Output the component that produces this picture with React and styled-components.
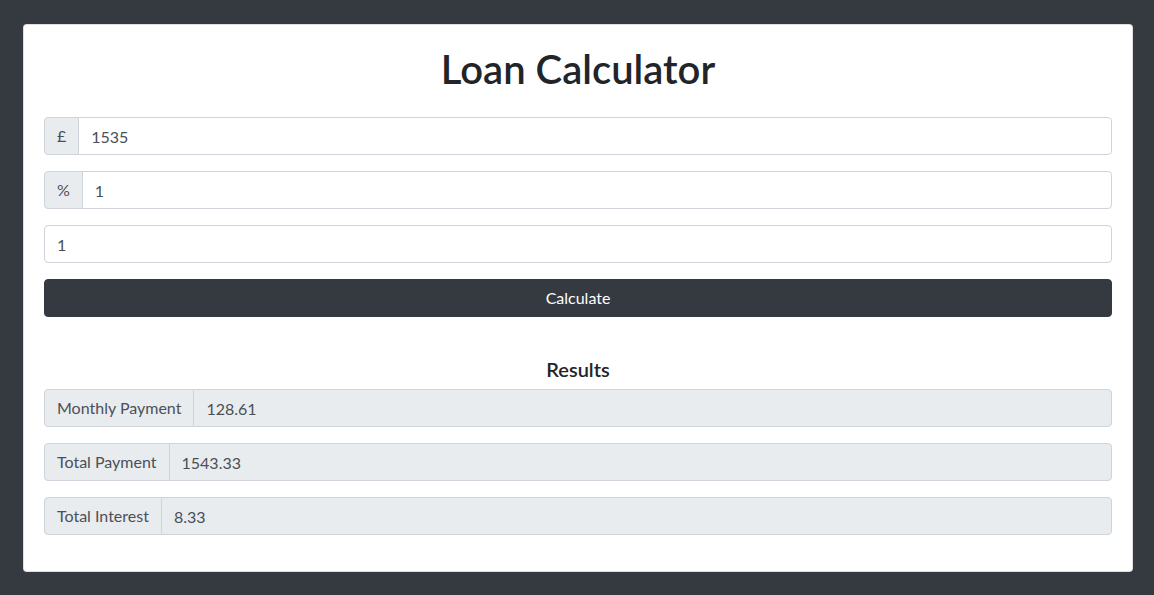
import React, { useState } from "react";
import styled, { createGlobalStyle } from "styled-components";

const GlobalStyle = createGlobalStyle`
  *, *::before, *::after { box-sizing: border-box; }
  html, body { margin: 0; padding: 0; }
  body {
    background: #343a40;
    font-family: "Lato", "Open Sans", sans-serif;
    font-size: 16px;
    line-height: 1.5;
    color: #212529;
  }
`;

const Page = styled.div`
  padding: 24px 0 24px 2px;
`;

const Card = styled.div`
  width: 1110px;
  margin: 0 auto;
  background: #fff;
  border: 1px solid rgba(0, 0, 0, 0.125);
  border-radius: 4px;
  padding: 20px;
`;

const Title = styled.h1`
  margin: 0 0 24px;
  font-size: 40px;
  line-height: 48px;
  font-weight: 600;
  text-align: center;
  color: #212529;
`;

const Form = styled.form`
  display: flex;
  flex-direction: column;
  gap: 16px;
`;

const Group = styled.div`
  display: flex;
  align-items: stretch;
  width: 100%;
  height: 38px;
`;

const Addon = styled.span`
  display: flex;
  align-items: center;
  padding: 6px 12px;
  font-size: 16px;
  line-height: 24px;
  color: #495057;
  background: #e9ecef;
  border: 1px solid #ced4da;
  border-radius: 4px 0 0 4px;
  white-space: nowrap;
`;

const Input = styled.input`
  flex: 1;
  min-width: 0;
  height: 38px;
  padding: 6px 12px;
  font-family: inherit;
  font-size: 16px;
  line-height: 24px;
  color: #495057;
  background: ${(p) => (p.readOnly ? "#e9ecef" : "#fff")};
  border: 1px solid #ced4da;
  border-radius: ${(p) => (p.$attached ? "0 4px 4px 0" : "4px")};
  margin-left: ${(p) => (p.$attached ? "-1px" : "0")};
  outline: none;
`;

const Button = styled.button`
  height: 38px;
  width: 100%;
  padding: 6px 12px;
  font-family: inherit;
  font-size: 16px;
  line-height: 24px;
  color: #fff;
  background: #343a40;
  border: 1px solid #343a40;
  border-radius: 4px;
  cursor: pointer;
`;

const Results = styled.section`
  margin-top: 40px;
  display: flex;
  flex-direction: column;
  gap: 16px;
  padding-bottom: 16px;
`;

const ResultsTitle = styled.h5`
  margin: 0 0 -8px;
  font-size: 20px;
  line-height: 24px;
  font-weight: 600;
  text-align: center;
  color: #212529;
`;

export default function App() {
  const [amount, setAmount] = useState("1535");
  const [interest, setInterest] = useState("1");
  const [years, setYears] = useState("1");

  const results = [
    ["Monthly Payment", "128.61"],
    ["Total Payment", "1543.33"],
    ["Total Interest", "8.33"],
  ];

  return (
    <Page>
      <GlobalStyle />
      <Card>
        <Title>Loan Calculator</Title>
        <Form onSubmit={(e) => e.preventDefault()}>
          <Group>
            <Addon>£</Addon>
            <Input $attached value={amount} onChange={(e) => setAmount(e.target.value)} />
          </Group>
          <Group>
            <Addon>%</Addon>
            <Input $attached value={interest} onChange={(e) => setInterest(e.target.value)} />
          </Group>
          <Group>
            <Input value={years} onChange={(e) => setYears(e.target.value)} />
          </Group>
          <Button type="submit">Calculate</Button>
        </Form>
        <Results>
          <ResultsTitle>Results</ResultsTitle>
          {results.map(([label, value]) => (
            <Group key={label}>
              <Addon>{label}</Addon>
              <Input $attached readOnly value={value} />
            </Group>
          ))}
        </Results>
      </Card>
    </Page>
  );
}
